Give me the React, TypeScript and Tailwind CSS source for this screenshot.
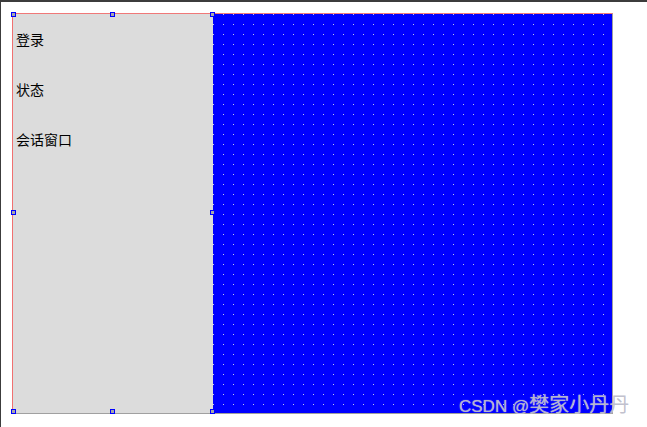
import React from "react";

const handles: { l: string; t: string }[] = [
  { l: "left-[-2px]", t: "top-[-2px]" },
  { l: "left-[97px]", t: "top-[-2px]" },
  { l: "left-[197px]", t: "top-[-2px]" },
  { l: "left-[-2px]", t: "top-[196px]" },
  { l: "left-[197px]", t: "top-[196px]" },
  { l: "left-[-2px]", t: "top-[395px]" },
  { l: "left-[97px]", t: "top-[395px]" },
  { l: "left-[197px]", t: "top-[395px]" },
];

export default function App() {
  return (
    <div className="relative w-[647px] h-[427px] overflow-hidden bg-white font-['Noto_Sans_CJK_SC',sans-serif]">
      <div className="h-[2px] bg-[#3c3c3c]" />
      <div className="flex h-[425px]">
        <div className="w-[1px] bg-[#3c3c3c]" />
        <div className="pl-[11px] pt-[11px]">
          <div className="relative flex w-[601px] h-[401px] border border-t-[#f07878] border-l-[#f07070] border-r-[#a0a0a0] border-b-[#a0a0a0]">
            <div className="w-[200px] bg-[#dcdcdc] flex flex-col gap-[30px] pt-[15px] pl-[3px] text-[14px] leading-[20px] text-black">
              <div>登录</div>
              <div>状态</div>
              <div>会话窗口</div>
            </div>
            <div className="flex-1 bg-[#0000ff] bg-[linear-gradient(to_bottom,transparent_1px,#0000ff_1px),linear-gradient(to_right,#c4c4e8_1px,#0000ff_1px)] bg-[size:10px_10px]" />
            {handles.map((h, i) => (
              <div
                key={i}
                className={`absolute ${h.l} ${h.t} w-[5px] h-[5px] bg-[#a8a8a8] border border-[#0000ff]`}
              />
            ))}
          </div>
        </div>
      </div>
      <div className="absolute left-[459px] top-[393px] flex items-baseline leading-[22px] whitespace-nowrap text-[rgba(185,185,200,0.9)] [text-shadow:0_0_1px_rgba(255,255,255,0.7)]">
        <span className="text-[17px] font-['Liberation_Sans',sans-serif]">CSDN @</span>
        <span className="text-[20px] font-['Noto_Sans_CJK_SC',sans-serif]">樊家小丹丹</span>
      </div>
    </div>
  );
}
